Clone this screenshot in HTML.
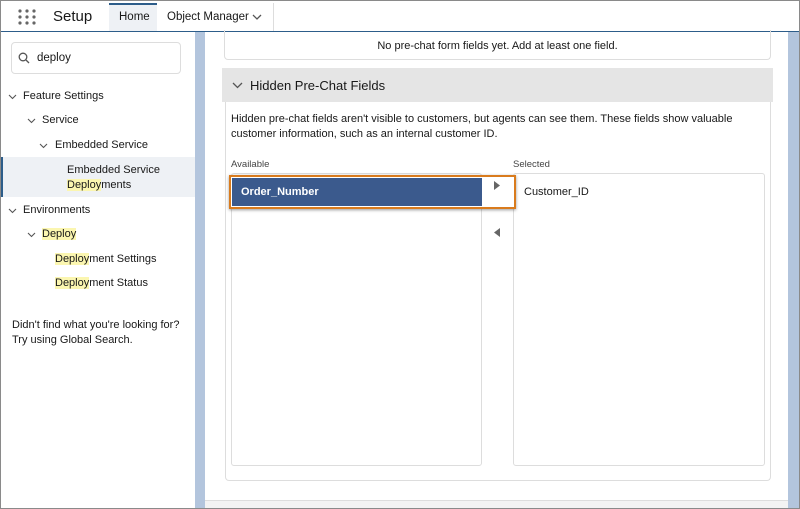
<!DOCTYPE html>
<html><head><meta charset="utf-8"><style>
*{box-sizing:border-box;margin:0;padding:0}
body{width:800px;height:509px;overflow:hidden;font-family:"Liberation Sans",sans-serif;color:#181818;background:#fff;position:relative;font-size:11px}
.abs{position:absolute}
.hl{background:#fbf6b0}
.t{position:absolute;white-space:nowrap}
</style></head><body>
<div class="abs" style="left:0;top:0;width:800px;height:509px;border:1px solid #8a8a8a;z-index:10;pointer-events:none"></div>
<!-- header -->
<div class="abs" style="left:0;top:0;width:800px;height:32px;background:#fff;border-bottom:1px solid #2d5d8a"></div>
<svg class="abs" style="left:18px;top:9px" width="18" height="16"><g fill="#666">
<circle cx="2" cy="2" r="1.6"/><circle cx="9" cy="2" r="1.6"/><circle cx="16" cy="2" r="1.6"/>
<circle cx="2" cy="8" r="1.6"/><circle cx="9" cy="8" r="1.6"/><circle cx="16" cy="8" r="1.6"/>
<circle cx="2" cy="14" r="1.6"/><circle cx="9" cy="14" r="1.6"/><circle cx="16" cy="14" r="1.6"/></g></svg>
<div class="t" style="left:53px;top:8px;font-size:15px">Setup</div>
<div class="abs" style="left:109px;top:3px;width:48px;height:28px;background:#eef1f5;border-top:2px solid #2d5d8a"></div>
<div class="t" style="left:119px;top:11px;font-size:11.5px">Home</div>
<div class="t" style="left:167px;top:11px;font-size:11.5px">Object Manager</div>
<svg class="abs" style="left:252px;top:14px" width="10" height="6"><path d="M1 1L5 5L9 1" fill="none" stroke="#555" stroke-width="1.3"/></svg>
<div class="abs" style="left:273px;top:3px;width:1px;height:28px;background:#ddd"></div>
<!-- sidebar -->
<div class="abs" style="left:0;top:32px;width:195px;height:477px;background:#fff"></div>
<div class="abs" style="left:11px;top:42px;width:170px;height:32px;border:1px solid #ddd;border-radius:4px"></div>
<svg class="abs" style="left:18px;top:52px" width="12" height="12"><circle cx="5" cy="5" r="3.8" fill="none" stroke="#555" stroke-width="1.3"/><path d="M8 8L11 11" stroke="#555" stroke-width="1.3"/></svg>
<div class="t" style="left:37px;top:52px;font-size:11.5px">deploy</div>
<svg class="abs" style="left:8px;top:94px" width="9" height="6"><path d="M1 1L4.5 4.5L8 1" fill="none" stroke="#555" stroke-width="1.1"/></svg>
<div class="t" style="left:23px;top:90px">Feature Settings</div>
<svg class="abs" style="left:27px;top:118px" width="9" height="6"><path d="M1 1L4.5 4.5L8 1" fill="none" stroke="#555" stroke-width="1.1"/></svg>
<div class="t" style="left:42px;top:114px">Service</div>
<svg class="abs" style="left:39px;top:143px" width="9" height="6"><path d="M1 1L4.5 4.5L8 1" fill="none" stroke="#555" stroke-width="1.1"/></svg>
<div class="t" style="left:55px;top:139px">Embedded Service</div>
<div class="abs" style="left:0;top:157px;width:195px;height:40px;background:#eef1f5;border-left:3px solid #2d5d8a"></div>
<div class="t" style="left:67px;top:164px">Embedded Service</div>
<div class="t" style="left:67px;top:179px"><span class="hl">Deploy</span>ments</div>
<svg class="abs" style="left:8px;top:208px" width="9" height="6"><path d="M1 1L4.5 4.5L8 1" fill="none" stroke="#555" stroke-width="1.1"/></svg>
<div class="t" style="left:23px;top:204px">Environments</div>
<svg class="abs" style="left:27px;top:232px" width="9" height="6"><path d="M1 1L4.5 4.5L8 1" fill="none" stroke="#555" stroke-width="1.1"/></svg>
<div class="t" style="left:42px;top:228px"><span class="hl">Deploy</span></div>
<div class="t" style="left:55px;top:253px"><span class="hl">Deploy</span>ment Settings</div>
<div class="t" style="left:55px;top:277px"><span class="hl">Deploy</span>ment Status</div>
<div class="t" style="left:12px;top:319px">Didn't find what you're looking for?</div>
<div class="t" style="left:12px;top:334px">Try using Global Search.</div>
<!-- blue bg strips -->
<div class="abs" style="left:195px;top:32px;width:10px;height:477px;background:#b3c5dd"></div>
<div class="abs" style="left:788px;top:32px;width:12px;height:477px;background:#b3c5dd"></div>
<div class="abs" style="left:205px;top:32px;width:583px;height:477px;background:#fff"></div>
<div class="abs" style="left:205px;top:500px;width:583px;height:9px;background:#f3f3f3;border-top:1px solid #ddd"></div>
<!-- top card -->
<div class="abs" style="left:224px;top:30px;width:547px;height:30px;border:1px solid #ddd;border-top:none;border-radius:0 0 4px 4px"></div>
<div class="t" style="left:224px;top:40px;width:547px;text-align:center">No pre-chat form fields yet. Add at least one field.</div>
<!-- section -->
<div class="abs" style="left:222px;top:68px;width:551px;height:34px;background:#e5e5e5"></div>
<svg class="abs" style="left:232px;top:82px" width="11" height="7"><path d="M1 1L5.5 5.5L10 1" fill="none" stroke="#555" stroke-width="1.3"/></svg>
<div class="t" style="left:250px;top:78px;font-size:13px">Hidden Pre-Chat Fields</div>
<div class="abs" style="left:225px;top:102px;width:546px;height:379px;border:1px solid #ddd;border-top:none;border-radius:0 0 4px 4px"></div>
<div class="t" style="left:231px;top:113px">Hidden pre-chat fields aren't visible to customers, but agents can see them. These fields show valuable</div>
<div class="t" style="left:231px;top:128px">customer information, such as an internal customer ID.</div>
<div class="t" style="left:231px;top:159px;font-size:9.5px;color:#444">Available</div>
<div class="t" style="left:513px;top:159px;font-size:9.5px;color:#444">Selected</div>
<div class="abs" style="left:231px;top:173px;width:251px;height:293px;border:1px solid #ddd;border-radius:3px"></div>
<div class="abs" style="left:513px;top:173px;width:252px;height:293px;border:1px solid #ddd;border-radius:3px"></div>
<div class="t" style="left:524px;top:186px">Customer_ID</div>
<div class="abs" style="left:229px;top:175px;width:287px;height:34px;border:2px solid #d97b1d;box-shadow:0 1px 3px rgba(0,0,0,.4);background:#fff"></div>
<div class="abs" style="left:232px;top:178px;width:250px;height:28px;background:#3b5a8d"></div>
<div class="t" style="left:241px;top:186px;color:#fff;font-weight:bold">Order_Number</div>
<svg class="abs" style="left:494px;top:181px" width="6" height="9"><path d="M0 0L6 4.5L0 9Z" fill="#666"/></svg>
<svg class="abs" style="left:494px;top:228px" width="6" height="9"><path d="M6 0L0 4.5L6 9Z" fill="#666"/></svg>
</body></html>
